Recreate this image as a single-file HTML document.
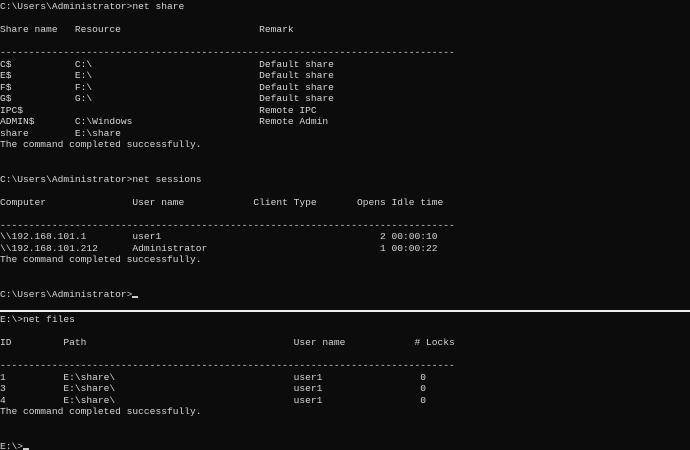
<!DOCTYPE html>
<html><head><style>
html,body{margin:0;padding:0;background:#0c0c0c;width:690px;height:450px;overflow:hidden}
pre{margin:0;font-family:"Liberation Mono",monospace;font-size:9.6px;line-height:11.5px;color:#d4d4d4;white-space:pre}
#top{position:absolute;left:0;top:1px;width:690px;height:309px;overflow:hidden}
#sep{position:absolute;left:0;top:310px;width:690px;height:2px;background:#f0f0f0}
#bot{position:absolute;left:0;top:314px;width:690px;height:136px;overflow:hidden}
.cur{display:inline-block;width:5.7px;height:2px;background:#ccc;vertical-align:-1px}
</style></head><body>
<div id="top"><pre>C:\Users\Administrator>net share

Share name   Resource                        Remark

-------------------------------------------------------------------------------
C$           C:\                             Default share
E$           E:\                             Default share
F$           F:\                             Default share
G$           G:\                             Default share
IPC$                                         Remote IPC
ADMIN$       C:\Windows                      Remote Admin
share        E:\share
The command completed successfully.


C:\Users\Administrator>net sessions

Computer               User name            Client Type       Opens Idle time

-------------------------------------------------------------------------------
\\192.168.101.1        user1                                      2 00:00:10
\\192.168.101.212      Administrator                              1 00:00:22
The command completed successfully.


C:\Users\Administrator><span class="cur"></span></pre></div>
<div id="sep"></div>
<div id="bot"><pre>E:\>net files

ID         Path                                    User name            # Locks

-------------------------------------------------------------------------------
1          E:\share\                               user1                 0
3          E:\share\                               user1                 0
4          E:\share\                               user1                 0
The command completed successfully.


E:\><span class="cur"></span></pre></div>
</body></html>
